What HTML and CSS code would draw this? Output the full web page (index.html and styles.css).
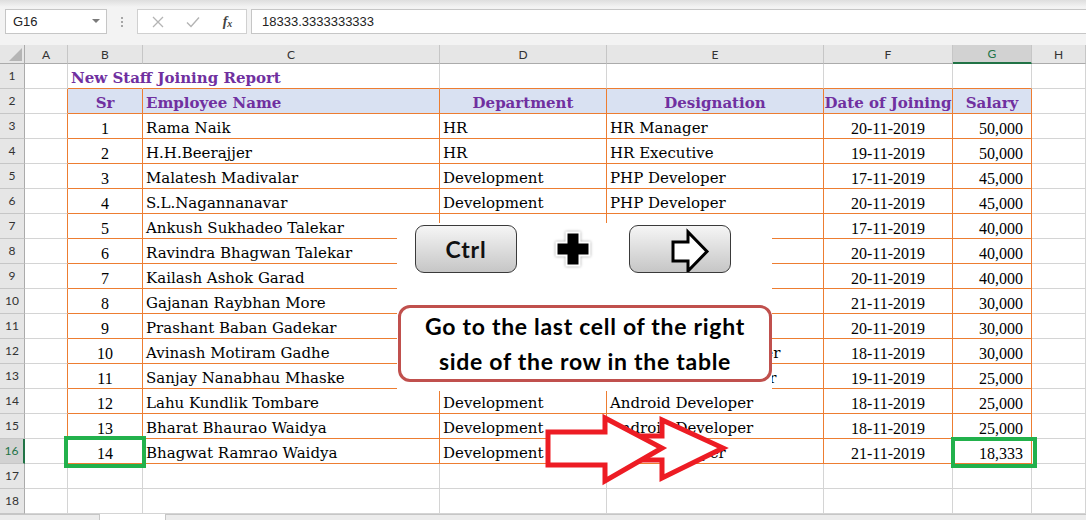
FILE: index.html
```html
<!DOCTYPE html>
<html>
<head>
<meta charset="utf-8">
<title>New Staff Joining Report</title>
<link rel="stylesheet" href="styles.css">
</head>
<body>
<div class="app">
  <div class="fbar">
    <div class="namebox"><span>G16</span><svg class="dd" width="8" height="5" viewBox="0 0 8 5"><path d="M0 0H8L4 4Z" fill="#7a7a7a"/></svg></div>
    <div class="vdots"><i></i><i></i><i></i></div>
    <div class="fxbox">
      <span class="fxi"><svg width="12" height="12" viewBox="0 0 12 12"><path d="M1 1L11 11M11 1L1 11" stroke="#b4b4b4" stroke-width="1.3" fill="none"/></svg></span>
      <span class="fxi"><svg width="14" height="12" viewBox="0 0 14 12"><path d="M1 6.5L5 10.5L13 1.5" stroke="#b4b4b4" stroke-width="1.4" fill="none"/></svg></span>
      <span class="fxi fx">f<small>x</small></span>
    </div>
    <div class="finput">18333.3333333333</div>
  </div>

  <div class="grid">
    <div class="corner"><svg width="24" height="18" viewBox="0 0 24 18"><path d="M22 3V16H9Z" fill="#b5b5b5"/></svg></div>
    <div class="ch">A</div><div class="ch">B</div><div class="ch">C</div><div class="ch">D</div><div class="ch">E</div><div class="ch">F</div><div class="ch sel">G</div><div class="ch">H</div>

    <div class="rh">1</div><div class="c"></div><div class="c ob nb l title">New Staff Joining Report</div><div class="c ob"></div><div class="c ob"></div><div class="c ob"></div><div class="c ob"></div><div class="c ob"></div><div class="c"></div>

    <div class="rh">2</div><div class="c or"></div><div class="c t hd m">Sr</div><div class="c t hd l">Employee Name</div><div class="c t hd m">Department</div><div class="c t hd m">Designation</div><div class="c t hd m">Date of Joining</div><div class="c t hd m">Salary</div><div class="c"></div>

    <div class="rh">3</div><div class="c or"></div><div class="c t n m">1</div><div class="c t l">Rama Naik</div><div class="c t l">HR</div><div class="c t l">HR Manager</div><div class="c t n m">20-11-2019</div><div class="c t n r">50,000</div><div class="c"></div>

    <div class="rh">4</div><div class="c or"></div><div class="c t n m">2</div><div class="c t l">H.H.Beerajjer</div><div class="c t l">HR</div><div class="c t l">HR Executive</div><div class="c t n m">19-11-2019</div><div class="c t n r">50,000</div><div class="c"></div>

    <div class="rh">5</div><div class="c or"></div><div class="c t n m">3</div><div class="c t l">Malatesh Madivalar</div><div class="c t l">Development</div><div class="c t l">PHP Developer</div><div class="c t n m">17-11-2019</div><div class="c t n r">45,000</div><div class="c"></div>

    <div class="rh">6</div><div class="c or"></div><div class="c t n m">4</div><div class="c t l">S.L.Nagannanavar</div><div class="c t l">Development</div><div class="c t l">PHP Developer</div><div class="c t n m">20-11-2019</div><div class="c t n r">45,000</div><div class="c"></div>

    <div class="rh">7</div><div class="c or"></div><div class="c t n m">5</div><div class="c t l">Ankush Sukhadeo Talekar</div><div class="c t l"></div><div class="c t l"></div><div class="c t n m">17-11-2019</div><div class="c t n r">40,000</div><div class="c"></div>

    <div class="rh">8</div><div class="c or"></div><div class="c t n m">6</div><div class="c t l">Ravindra Bhagwan Talekar</div><div class="c t l"></div><div class="c t l"></div><div class="c t n m">20-11-2019</div><div class="c t n r">40,000</div><div class="c"></div>

    <div class="rh">9</div><div class="c or"></div><div class="c t n m">7</div><div class="c t l">Kailash Ashok Garad</div><div class="c t l"></div><div class="c t l"></div><div class="c t n m">20-11-2019</div><div class="c t n r">40,000</div><div class="c"></div>

    <div class="rh">10</div><div class="c or"></div><div class="c t n m">8</div><div class="c t l">Gajanan Raybhan More</div><div class="c t l"></div><div class="c t l"></div><div class="c t n m">21-11-2019</div><div class="c t n r">30,000</div><div class="c"></div>

    <div class="rh">11</div><div class="c or"></div><div class="c t n m">9</div><div class="c t l">Prashant Baban Gadekar</div><div class="c t l"></div><div class="c t l"></div><div class="c t n m">20-11-2019</div><div class="c t n r">30,000</div><div class="c"></div>

    <div class="rh">12</div><div class="c or"></div><div class="c t n m">10</div><div class="c t l">Avinash Motiram Gadhe</div><div class="c t l"></div><div class="c t l">Senior PHP Developer</div><div class="c t n m">18-11-2019</div><div class="c t n r">30,000</div><div class="c"></div>

    <div class="rh">13</div><div class="c or"></div><div class="c t n m">11</div><div class="c t l">Sanjay Nanabhau Mhaske</div><div class="c t l"></div><div class="c t l">System Administrator</div><div class="c t n m">19-11-2019</div><div class="c t n r">25,000</div><div class="c"></div>

    <div class="rh">14</div><div class="c or"></div><div class="c t n m">12</div><div class="c t l">Lahu Kundlik Tombare</div><div class="c t l">Development</div><div class="c t l">Android Developer</div><div class="c t n m">18-11-2019</div><div class="c t n r">25,000</div><div class="c"></div>

    <div class="rh">15</div><div class="c or"></div><div class="c t n m">13</div><div class="c t l">Bharat Bhaurao Waidya</div><div class="c t l">Development</div><div class="c t l">Android Developer</div><div class="c t n m">18-11-2019</div><div class="c t n r">25,000</div><div class="c"></div>

    <div class="rh sel">16</div><div class="c or"></div><div class="c t n m">14</div><div class="c t l">Bhagwat Ramrao Waidya</div><div class="c t l">Development</div><div class="c t l">PHP Developer</div><div class="c t n m">21-11-2019</div><div class="c t n r">18,333</div><div class="c"></div>

    <div class="rh">17</div><div class="c"></div><div class="c"></div><div class="c"></div><div class="c"></div><div class="c"></div><div class="c"></div><div class="c"></div><div class="c"></div>

    <div class="rh">18</div><div class="c"></div><div class="c"></div><div class="c"></div><div class="c"></div><div class="c"></div><div class="c"></div><div class="c"></div><div class="c"></div>
  </div>

  <div class="tabs"><div class="tb1"></div><div class="tb2"></div><div class="tb3"></div></div>

  <!-- annotations drawn over the sheet -->
  <div class="mark mark-b"></div>
  <div class="mark mark-g"></div>

  <div class="overlay">
    <div class="keys">
      <div class="key"><span class="ctrl">Ctrl</span></div>
      <svg class="plus" width="40" height="40" viewBox="0 0 40 40"><path d="M13.5 3.5H26.5V13.5H36.5V26.5H26.5V36.5H13.5V26.5H3.5V13.5H13.5Z" fill="#000" stroke="#fff" stroke-width="2" stroke-linejoin="miter"/></svg>
      <div class="key"><svg width="100" height="45" viewBox="0 0 100 45"><path d="M43 16H58V6L77 25.5L58 45V35H43Z" transform="translate(0,-1)" fill="#fff" stroke="#000" stroke-width="3" stroke-linejoin="miter"/></svg></div>
    </div>
    <div class="callout">Go to the last cell of the right<br>side of the row in the table</div>
  </div>

  <svg class="arrows" width="190" height="80" viewBox="0 0 190 80">
    <path d="M65 26H122V10L183 38L122 68V50H65Z" fill="#fff" stroke="#ed1c24" stroke-width="5" stroke-linejoin="miter"/>
    <path d="M8 22H65V8L122 38L65 71V55H8Z" fill="#fff" stroke="#ed1c24" stroke-width="5" stroke-linejoin="miter"/>
  </svg>
</div>
</body>
</html>
```

FILE: styles.css
```css
* { box-sizing: border-box; }
html, body { margin: 0; padding: 0; }
body {
  width: 1086px;
  height: 520px;
  overflow: hidden;
  background: #fff;
  font-family: "Lato", "Liberation Sans", sans-serif;
}
.app { position: relative; width: 1086px; height: 520px; overflow: hidden; }

/* formula bar */
.fbar {
  height: 45px;
  display: flex;
  align-items: flex-start;
  padding: 9px 0 0 5px;
  background: linear-gradient(#dedede 0, #f3f3f3 7px, #f3f3f3 100%);
}
.namebox {
  width: 102px;
  height: 25px;
  background: #fff;
  border: 1px solid #c6c6c6;
  display: flex;
  align-items: center;
  justify-content: space-between;
  padding: 0 6px 0 7px;
  font: 13px "Liberation Sans", sans-serif;
  color: #222;
}
.vdots {
  width: 30px;
  height: 25px;
  display: flex;
  flex-direction: column;
  align-items: center;
  justify-content: center;
  gap: 2px;
}
.vdots i { display: block; width: 2px; height: 2px; background: #a6a6a6; }
.fxbox {
  width: 110px;
  height: 25px;
  background: #fff;
  border: 1px solid #d0d0d0;
  display: flex;
  align-items: center;
  padding-left: 2px;
}
.fxi { width: 35px; display: flex; justify-content: center; align-items: center; }
.fx { font: italic bold 14px "Liberation Serif", serif; color: #444; }
.fx small { font-size: 10px; position: relative; top: 2px; }
.finput {
  flex: 1;
  height: 25px;
  margin-left: 4px;
  background: #fff;
  border: 1px solid #c6c6c6;
  border-right: none;
  padding-left: 10px;
  font: 13px/23px "Liberation Sans", sans-serif;
  color: #222;
}

/* sheet grid */
.grid {
  display: grid;
  grid-template-columns: 25px 43px 75px 297px 167px 217px 129px 79px 54px;
  grid-template-rows: 19px repeat(18, 25px);
}
.corner {
  background: #e6e6e6;
  border-right: 1px solid #ababab;
  border-bottom: 1px solid #ababab;
}
.corner svg { display: block; }
.ch {
  background: #e6e6e6;
  border-right: 1px solid #c6c6c6;
  border-bottom: 1px solid #ababab;
  display: flex;
  align-items: center;
  justify-content: center;
  font: 12px "Lato", sans-serif;
  color: #333;
}
.ch.sel { background: #d2d2d2; color: #217346; border-bottom: 2px solid #217346; }
.rh {
  background: #e6e6e6;
  border-right: 1px solid #ababab;
  border-bottom: 1px solid #c6c6c6;
  display: flex;
  justify-content: center;
  align-items: flex-end;
  padding-bottom: 5px;
  font: 12px "Lato", sans-serif;
  color: #333;
}
.rh.sel { background: #d2d2d2; color: #217346; border-right: 2px solid #217346; }

.c {
  border-right: 1px solid #d4d4d4;
  border-bottom: 1px solid #d4d4d4;
  display: flex;
  align-items: flex-end;
  white-space: nowrap;
  font: 15px/19px "DejaVu Serif", "Liberation Serif", serif;
  color: #000;
}
.c.n { font: 16px/19px "Liberation Serif", serif; }
.t { border-right-color: #ed7d31; border-bottom-color: #ed7d31; }
.ob { border-bottom-color: #ed7d31; }
.or { border-right-color: #ed7d31; }
.nb { border-right-color: transparent; }
.hd { background: #d9e1f2; color: #7030a0; font-weight: bold; }
.title { color: #7030a0; font-weight: bold; }
.l { padding-left: 3px; }
.m { justify-content: center; }
.r { justify-content: flex-end; padding-right: 8px; }

/* sheet tabs strip */
.tabs { height: 6px; display: flex; background: #e6e6e6; }
.tb1 { width: 100px; background: #ececec; border-top: 1px solid #c6c6c6; border-right: 1px solid #c6c6c6; }
.tb2 { width: 65px; background: #fff; }
.tb3 { flex: 1; background: #ececec; border-top: 1px solid #c6c6c6; border-left: 1px solid #c6c6c6; }

/* annotations */
.mark { position: absolute; border: 4px solid #22b14c; }
.mark-b { left: 64px; top: 436px; width: 82px; height: 32px; }
.mark-g { left: 951px; top: 437px; width: 86px; height: 31px; }

.overlay {
  position: absolute;
  left: 397px;
  top: 223px;
  width: 375px;
  height: 168px;
  background: #fff;
}
.keys { display: flex; align-items: center; margin: 2px 0 0 18px; }
.key {
  width: 102px;
  height: 48px;
  border: 1.5px solid #3a3a3a;
  border-radius: 9px;
  background: linear-gradient(#f5f5f5, #c6c6c6);
  display: flex;
  align-items: center;
  justify-content: center;
}
.key svg { display: block; }
.ctrl { font: bold 23px "Lato", sans-serif; letter-spacing: 0.8px; color: #111; }
.plus { margin: 0 36px; filter: drop-shadow(0 0 1.5px rgba(0, 0, 0, 0.35)); }
.callout {
  margin: 32px 0 0 1px;
  width: 374px;
  height: 77px;
  border: 3px solid #c0504d;
  border-radius: 12px;
  background: #fff;
  display: flex;
  align-items: center;
  justify-content: center;
  text-align: center;
  font: bold 23px/35px "Lato", sans-serif;
  letter-spacing: 0.7px;
  color: #000;
}
.arrows { position: absolute; left: 540px; top: 410px; }
```
